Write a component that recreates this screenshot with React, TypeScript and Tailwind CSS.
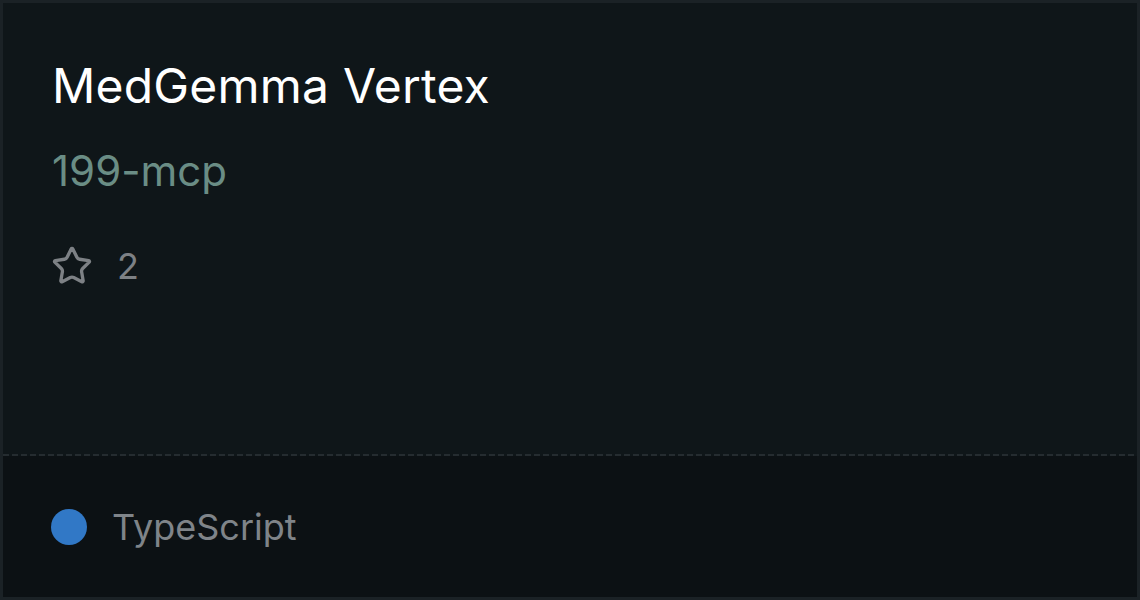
import React from "react";

export default function App() {
  return (
    <div className="w-[1140px] h-[600px] bg-[#1b2226] p-[3px]" style={{ fontFamily: "Inter, 'Noto Sans', sans-serif" }}>
      <div className="w-full h-full flex flex-col bg-[#0f1619]">
        <div className="flex-1 flex flex-col pl-[49px] pt-[55px]">
          <div className="text-[48px] leading-[56px] text-white tracking-[0.2px]">MedGemma Vertex</div>
          <div className="mt-[32px] text-[42px] leading-[50px] text-[#6a8d85]">199-mcp</div>
          <div className="mt-[49px] flex items-center gap-[24px]">
            <svg width="42" height="42" viewBox="0 0 24 24" fill="none" stroke="#7d8185" strokeWidth="1.9" strokeLinecap="round" strokeLinejoin="round" className="-ml-[1px]">
              <path d="M11.525 2.295a.53.53 0 0 1 .95 0l2.31 4.679a2.123 2.123 0 0 0 1.595 1.16l5.166.756a.53.53 0 0 1 .294.904l-3.736 3.638a2.123 2.123 0 0 0-.611 1.878l.882 5.14a.53.53 0 0 1-.771.56l-4.618-2.428a2.122 2.122 0 0 0-1.973 0L6.396 21.01a.53.53 0 0 1-.77-.56l.881-5.139a2.122 2.122 0 0 0-.611-1.879L2.160 9.795a.53.53 0 0 1 .294-.906l5.165-.755a2.122 2.122 0 0 0 1.597-1.160z" />
            </svg>
            <span className="text-[36px] leading-[42px] text-[#7d8185]">2</span>
          </div>
        </div>
        <div className="h-[2px] w-full" style={{ backgroundImage: "repeating-linear-gradient(to right, #252c30 0 6px, transparent 6px 9px)" }} />
        <div className="h-[141px] bg-[#0c1114] flex items-center pl-[48px] gap-[25px]">
          <div className="w-[36px] h-[36px] rounded-full bg-[#3178c6]" />
          <span className="text-[36px] leading-[42px] text-[#7f8489]">TypeScript</span>
        </div>
      </div>
    </div>
  );
}
